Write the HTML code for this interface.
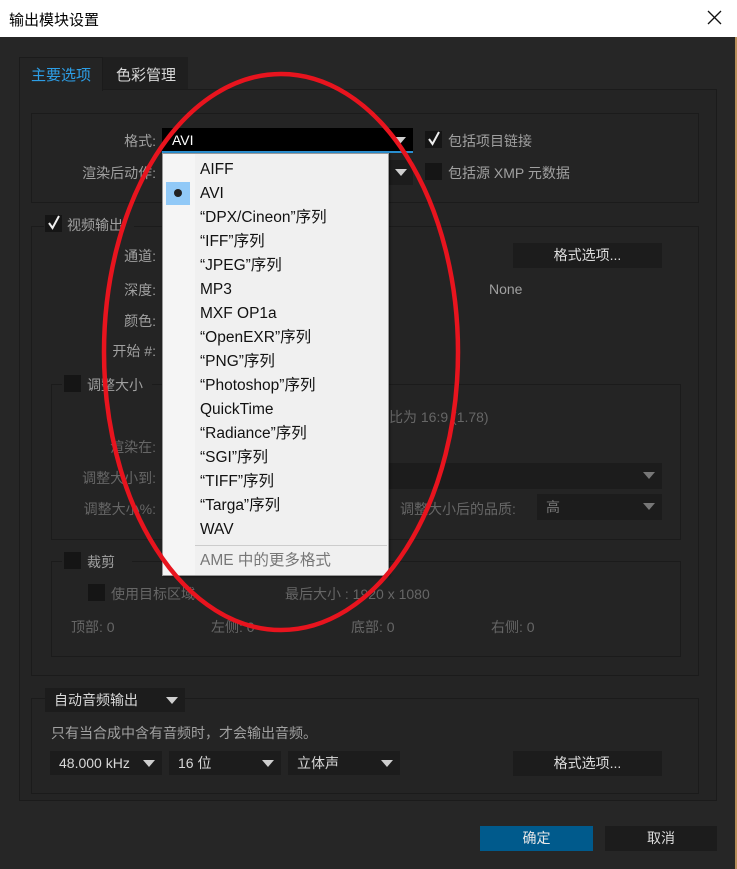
<!DOCTYPE html>
<html><head><meta charset="utf-8"><style>
*{margin:0;padding:0;box-sizing:border-box}
body{width:737px;height:869px;background:#262626;position:relative;overflow:hidden;font-family:"Liberation Sans","Noto Sans CJK SC",sans-serif;font-size:14px;color:#cfcfcf}
.a{position:absolute;white-space:nowrap}
.box{position:absolute;border:1px solid #1b1b1b}
.lbl{position:absolute;color:#a0a0a0;text-align:right;white-space:nowrap}
.dim{color:#666}
.cb{position:absolute;width:17px;height:17px;background:#151515}
.dd{position:absolute;background:#1c1c1c;color:#d8d8d8;padding-left:9px;line-height:24px;font-size:14px}
.tri{position:absolute;right:7px;top:9px;width:0;height:0;border-left:6px solid transparent;border-right:6px solid transparent;border-top:7px solid #cfcfcf}
.btn{position:absolute;background:#1c1c1c;color:#dcdcdc;text-align:center;line-height:24px}
.mi{position:absolute;left:37px;color:#111;font-size:15.5px;line-height:24px}
</style></head><body>
<div class="a" style="left:0;top:0;width:737px;height:37px;background:#fff"></div>
<div class="a" style="left:9px;top:9px;color:#000;font-size:15px">输出模块设置</div>
<svg class="a" style="left:707px;top:10px" width="15" height="15"><path d="M1 1L14 14M14 1L1 14" stroke="#111" stroke-width="1.3"/></svg>
<div class="a" style="left:735px;top:37px;width:2px;height:832px;background:#b98f5a"></div>

<div class="box" style="left:19px;top:89px;width:698px;height:712px;background:#242424"></div>
<div class="a" style="left:19px;top:57px;width:84px;height:34px;background:#242424;border:1px solid #1b1b1b;border-bottom:none"></div>
<div class="a" style="left:103px;top:57px;width:85px;height:32px;background:#1f1f1f"></div>
<div class="a" style="left:31px;top:64px;color:#2d9ee6;font-size:15px">主要选项</div>
<div class="a" style="left:116px;top:64px;color:#d8d8d8;font-size:15px">色彩管理</div>

<div class="box" style="left:31px;top:113px;width:668px;height:90px"></div>
<div class="lbl" style="left:60px;width:96px;top:131px">格式:</div>
<div class="lbl" style="left:60px;width:96px;top:163px">渲染后动作:</div>
<div class="a" style="left:162px;top:128px;width:251px;height:25px;background:#000;border-bottom:2px solid #2a8fd0;color:#fff;padding-left:10px;line-height:24px">AVI<div class="tri"></div></div>
<div class="a" style="left:388px;top:160px;width:25px;height:25px;background:#1c1c1c"><div class="tri" style="right:6px"></div></div>
<div class="cb" style="left:425px;top:131px"></div>
<svg class="a" style="left:425px;top:130px" width="18" height="18"><path d="M4 9L7.5 14L14 2" stroke="#eee" stroke-width="2" fill="none"/></svg>
<div class="a" style="left:448px;top:131px;color:#a0a0a0">包括项目链接</div>
<div class="cb" style="left:425px;top:163px"></div>
<div class="a" style="left:448px;top:163px;color:#a0a0a0">包括源 XMP 元数据</div>

<div class="box" style="left:31px;top:226px;width:668px;height:450px"></div>
<div class="a" style="left:44px;top:216px;width:90px;height:20px;background:#242424"></div>
<div class="cb" style="left:45px;top:215px"></div>
<svg class="a" style="left:45px;top:214px" width="18" height="18"><path d="M4 9L7.5 14L14 2" stroke="#eee" stroke-width="2" fill="none"/></svg>
<div class="a" style="left:67px;top:215px;color:#a0a0a0">视频输出</div>
<div class="lbl" style="left:60px;width:96px;top:246px">通道:</div>
<div class="lbl" style="left:60px;width:96px;top:280px">深度:</div>
<div class="lbl" style="left:60px;width:96px;top:311px">颜色:</div>
<div class="lbl" style="left:60px;width:96px;top:341px">开始 #:</div>
<div class="btn" style="left:513px;top:243px;width:149px;height:25px">格式选项...</div>
<div class="a" style="left:489px;top:281px;color:#a0a0a0">None</div>

<div class="box" style="left:51px;top:384px;width:630px;height:156px"></div>
<div class="a" style="left:62px;top:374px;width:90px;height:20px;background:#242424"></div>
<div class="cb" style="left:64px;top:375px"></div>
<div class="a" style="left:87px;top:375px;color:#a0a0a0">调整大小</div>
<div class="a dim" style="left:389px;top:407px">比为 16:9 (1.78)</div>
<div class="lbl dim" style="left:60px;width:96px;top:437px">渲染在:</div>
<div class="lbl dim" style="left:50px;width:106px;top:468px">调整大小到:</div>
<div class="lbl dim" style="left:50px;width:106px;top:499px">调整大小%:</div>
<div class="dd" style="left:388px;top:463px;width:274px;height:26px"><div class="tri" style="border-top-color:#777"></div></div>
<div class="a dim" style="left:400px;top:499px">调整大小后的品质:</div>
<div class="dd" style="left:537px;top:494px;width:125px;height:26px;color:#777;line-height:26px">高<div class="tri" style="border-top-color:#777"></div></div>

<div class="box" style="left:51px;top:561px;width:630px;height:96px"></div>
<div class="a" style="left:62px;top:551px;width:70px;height:20px;background:#242424"></div>
<div class="cb" style="left:64px;top:552px"></div>
<div class="a" style="left:87px;top:552px;color:#a0a0a0">裁剪</div>
<div class="cb" style="left:88px;top:584px"></div>
<div class="a dim" style="left:111px;top:584px">使用目标区域</div>
<div class="a dim" style="left:285px;top:584px">最后大小 : 1920 x 1080</div>
<div class="a dim" style="left:71px;top:617px">顶部: 0</div>
<div class="a dim" style="left:211px;top:617px">左侧: 0</div>
<div class="a dim" style="left:351px;top:617px">底部: 0</div>
<div class="a dim" style="left:491px;top:617px">右侧: 0</div>

<div class="box" style="left:31px;top:698px;width:668px;height:96px"></div>
<div class="dd" style="left:45px;top:688px;width:140px;height:24px">自动音频输出<div class="tri"></div></div>
<div class="a" style="left:51px;top:723px;color:#a0a0a0">只有当合成中含有音频时，才会输出音频。</div>
<div class="dd" style="left:50px;top:751px;width:112px;height:24px">48.000 kHz<div class="tri"></div></div>
<div class="dd" style="left:169px;top:751px;width:112px;height:24px">16 位<div class="tri"></div></div>
<div class="dd" style="left:288px;top:751px;width:112px;height:24px">立体声<div class="tri"></div></div>
<div class="btn" style="left:513px;top:751px;width:149px;height:25px">格式选项...</div>

<div class="btn" style="left:480px;top:826px;width:113px;height:25px;background:#005a8c;color:#e8e8e8">确定</div>
<div class="btn" style="left:605px;top:826px;width:112px;height:25px">取消</div>

<div class="a" style="left:162px;top:153px;width:227px;height:423px;background:#f0f0f0;border:1px solid #999;box-shadow:1px 1px 2px rgba(0,0,0,.5)">
<div class="a" style="left:0;top:0;width:32px;height:421px;background:#f5f5f5"></div>
<div class="a" style="left:3px;top:28px;width:24px;height:23px;background:#91c9f7"></div>
<div class="a" style="left:11px;top:35px;width:8px;height:8px;border-radius:50%;background:#222"></div>
<div class="mi" style="top:4px">AIFF</div>
<div class="mi" style="top:28px">AVI</div>
<div class="mi" style="top:52px">“DPX/Cineon”序列</div>
<div class="mi" style="top:76px">“IFF”序列</div>
<div class="mi" style="top:100px">“JPEG”序列</div>
<div class="mi" style="top:124px">MP3</div>
<div class="mi" style="top:148px">MXF OP1a</div>
<div class="mi" style="top:172px">“OpenEXR”序列</div>
<div class="mi" style="top:196px">“PNG”序列</div>
<div class="mi" style="top:220px">“Photoshop”序列</div>
<div class="mi" style="top:244px">QuickTime</div>
<div class="mi" style="top:268px">“Radiance”序列</div>
<div class="mi" style="top:292px">“SGI”序列</div>
<div class="mi" style="top:316px">“TIFF”序列</div>
<div class="mi" style="top:340px">“Targa”序列</div>
<div class="mi" style="top:364px">WAV</div>
<div class="a" style="left:32px;top:391px;width:192px;height:1px;background:#ccc"></div>
<div class="mi" style="top:395px;color:#777">AME 中的更多格式</div>
</div>

<svg class="a" style="left:0;top:0" width="737" height="869"><ellipse cx="281" cy="352" rx="177" ry="278" fill="none" stroke="#e8141e" stroke-width="4.5"/></svg>
</body></html>
